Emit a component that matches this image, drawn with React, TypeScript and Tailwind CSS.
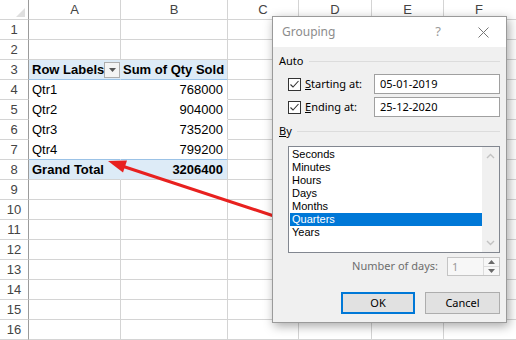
import React from 'react';

const CELL = "font-['Liberation_Sans',Arial,sans-serif] text-[13px] text-black whitespace-nowrap";
const GRID = 'border-[#d4d4d4]';

// row number header cell
function RowHead({ n }: { n: number | string }) {
  return (
    <div className="w-[29px] h-[20px] shrink-0 flex items-center justify-center border-r border-b border-r-[#9b9b9b] border-b-[#d4d4d4] text-[13px] text-[#444] font-['Liberation_Sans',Arial,sans-serif]">
      {n}
    </div>
  );
}

function RestCells() {
  return (
    <>
      <div className={`w-[71px] h-[20px] shrink-0 border-r border-b ${GRID}`} />
      <div className={`w-[73px] h-[20px] shrink-0 border-r border-b ${GRID}`} />
      <div className={`w-[72px] h-[20px] shrink-0 border-r border-b ${GRID}`} />
      <div className={`w-[80px] h-[20px] shrink-0 border-b ${GRID}`} />
    </>
  );
}

function EmptyRow({ n }: { n: number }) {
  return (
    <div className="flex">
      <RowHead n={n} />
      <div className={`w-[92px] h-[20px] shrink-0 border-r border-b ${GRID}`} />
      <div className={`w-[107px] h-[20px] shrink-0 border-r border-b ${GRID}`} />
      <RestCells />
    </div>
  );
}

function DataRow({ n, label, value, last }: { n: number; label: string; value: string; last?: boolean }) {
  return (
    <div className="flex">
      <RowHead n={n} />
      <div className={`w-[92px] h-[20px] shrink-0 flex items-center pl-[3px] border-r border-b border-r-white ${last ? 'border-b-[#9bc2e6]' : 'border-b-white'} ${CELL}`}>
        {label}
      </div>
      <div className={`w-[107px] h-[20px] shrink-0 flex items-center justify-end pr-[4px] border-r border-b border-r-[#d4d4d4] ${last ? 'border-b-[#9bc2e6]' : 'border-b-white'} ${CELL}`}>
        {value}
      </div>
      <RestCells />
    </div>
  );
}

function Checkbox() {
  return (
    <div className="w-[13px] h-[13px] shrink-0 border border-[#333] bg-white flex items-center justify-center">
      <svg width="11" height="11" viewBox="0 0 11 11">
        <path d="M1.5 5.5 L4 8 L9.5 2" fill="none" stroke="#333" strokeWidth="1.1" />
      </svg>
    </div>
  );
}

function Chevron({ up }: { up?: boolean }) {
  return (
    <svg width="9" height="6" viewBox="0 0 9 6">
      <path d={up ? 'M1 5 L4.5 1.5 L8 5' : 'M1 1 L4.5 4.5 L8 1'} fill="none" stroke="#c2c2c2" strokeWidth="1.4" />
    </svg>
  );
}

const UNITS = ['Seconds', 'Minutes', 'Hours', 'Days', 'Months', 'Quarters', 'Years'];

function GroupingDialog() {
  return (
    <div className="absolute left-[272px] top-[16px] w-[235px] h-[307px] border border-[#9a9a9a] bg-[#f0f0f0] shadow-[2px_3px_10px_rgba(0,0,0,0.35)] flex flex-col font-['Noto_Sans',sans-serif] text-[11px] text-black">
      {/* title bar */}
      <div className="h-[30px] bg-white flex items-center shrink-0">
        <span className="flex-1 pl-[9px] text-[12px] text-[#8c8c8c]">Grouping</span>
        <span className="w-[44px] text-center text-[13px] text-[#9a9a9a]">?</span>
        <span className="w-[46px] flex justify-center">
          <svg width="11" height="11" viewBox="0 0 11 11">
            <path d="M0.5 0.5 L10.5 10.5 M10.5 0.5 L0.5 10.5" stroke="#777" strokeWidth="1" />
          </svg>
        </span>
      </div>

      <div className="flex flex-col pl-[6px] pr-[6px] pt-[7px]">
        {/* Auto group */}
        <div className="h-[14px] flex items-center gap-[6px]">
          <span>Auto</span>
          <div className="flex-1 h-px bg-[#dcdcdc]" />
        </div>
        <div className="mt-[6px] flex items-center h-[20px]">
          <div className="ml-[9px]"><Checkbox /></div>
          <span className="ml-[4px] flex-1"><span className="underline">S</span>tarting at:</span>
          <div className="w-[126px] h-[20px] border border-[#a0a0a0] bg-white flex items-center pl-[5px]">05-01-2019</div>
        </div>
        <div className="mt-[3px] flex items-center h-[20px]">
          <div className="ml-[9px]"><Checkbox /></div>
          <span className="ml-[4px] flex-1"><span className="underline">E</span>nding at:</span>
          <div className="w-[126px] h-[20px] border border-[#a0a0a0] bg-white flex items-center pl-[5px]">25-12-2020</div>
        </div>

        {/* By group */}
        <div className="mt-[7px] h-[14px] flex items-center gap-[5px]">
          <span><span className="underline">B</span>y</span>
          <div className="flex-1 h-px bg-[#dcdcdc]" />
        </div>
        <div className="mt-[8px] ml-[9px] h-[107px] border border-[#828790] bg-white flex">
          <div className="flex-1 pl-px pt-px flex flex-col font-['Liberation_Sans',Arial,sans-serif]">
            {UNITS.map(u => (
              <div
                key={u}
                className={`h-[13px] leading-[13px] pl-[2px] ${u === 'Quarters' ? 'bg-[#0078d7] text-white' : ''}`}
              >
                {u}
              </div>
            ))}
          </div>
          <div className="w-[17px] bg-[#f0f0f0] flex flex-col items-center justify-between py-[6px]">
            <Chevron up />
            <Chevron />
          </div>
        </div>

        {/* Number of days */}
        <div className="mt-[4px] flex items-center justify-end h-[19px]">
          <span className="text-[#6d6d6d]">Number of days:</span>
          <div className="ml-[9px] w-[53px] h-[19px] border border-[#c4c4c4] bg-[#f7f7f7] flex">
            <span className="flex-1 pl-[4px] text-[#9a9a9a] leading-[17px]">1</span>
            <div className="w-[16px] border-l border-[#dcdcdc] flex flex-col">
              <div className="flex-1 flex items-center justify-center border-b border-[#dcdcdc]">
                <svg width="7" height="4" viewBox="0 0 7 4"><path d="M0 4 L3.5 0 L7 4 Z" fill="#6a6a6a" /></svg>
              </div>
              <div className="flex-1 flex items-center justify-center">
                <svg width="7" height="4" viewBox="0 0 7 4"><path d="M0 0 L3.5 4 L7 0 Z" fill="#6a6a6a" /></svg>
              </div>
            </div>
          </div>
        </div>

        {/* buttons */}
        <div className="mt-[16px] flex justify-end gap-[10px]">
          <button className="w-[74px] h-[22px] border-2 border-[#0078d7] bg-[#e1e1e1] text-[11px]">OK</button>
          <button className="w-[75px] h-[22px] border border-[#adadad] bg-[#e1e1e1] text-[11px]">Cancel</button>
        </div>
      </div>
    </div>
  );
}

export default function App() {
  return (
    <div className="relative w-[516px] h-[340px] overflow-hidden bg-white">
      {/* column headers */}
      <div className="flex">
        <div className="w-[29px] h-[20px] shrink-0 relative border-r border-b border-r-[#9b9b9b] border-b-[#d4d4d4]">
          <svg className="absolute left-[16px] top-[8px]" width="9" height="9" viewBox="0 0 9 9">
            <path d="M9 0 L9 9 L0 9 Z" fill="#dfdfdf" />
          </svg>
        </div>
        {[
          ['A', 'w-[92px]'],
          ['B', 'w-[107px]'],
          ['C', 'w-[71px]'],
          ['D', 'w-[73px]'],
          ['E', 'w-[72px]'],
        ].map(([c, w]) => (
          <div key={c} className={`${w} h-[20px] shrink-0 flex items-center justify-center border-r border-b border-r-[#d4d4d4] border-b-[#d4d4d4] text-[13px] text-[#444] font-['Liberation_Sans',Arial,sans-serif]`}>
            {c}
          </div>
        ))}
        <div className="w-[80px] h-[20px] shrink-0 flex items-center pl-[31px] border-b border-[#d4d4d4] text-[13px] text-[#444] font-['Liberation_Sans',Arial,sans-serif]">
          F
        </div>
      </div>

      <EmptyRow n={1} />
      <EmptyRow n={2} />

      {/* pivot header row */}
      <div className="flex">
        <RowHead n={3} />
        <div className={`w-[92px] h-[20px] shrink-0 flex items-center pl-[3px] bg-[#ddebf7] border-r border-b border-r-[#ddebf7] border-b-[#9bc2e6] font-bold ${CELL} text-[12.5px]`}>
          <span>Row Labels</span>
          <span className="ml-auto mr-[1px] w-[16px] h-[16px] shrink-0 border border-[#adadad] bg-[#f4f4f4] flex items-center justify-center">
            <svg width="7" height="4" viewBox="0 0 7 4"><path d="M0 0 L3.5 4 L7 0 Z" fill="#555" /></svg>
          </span>
        </div>
        <div className={`w-[107px] h-[20px] shrink-0 flex items-center pl-[2px] bg-[#ddebf7] border-r border-b border-r-[#d4d4d4] border-b-[#9bc2e6] font-bold ${CELL}`}>
          Sum of Qty Sold
        </div>
        <RestCells />
      </div>

      <DataRow n={4} label="Qtr1" value="768000" />
      <DataRow n={5} label="Qtr2" value="904000" />
      <DataRow n={6} label="Qtr3" value="735200" />
      <DataRow n={7} label="Qtr4" value="799200" last />

      {/* grand total */}
      <div className="flex">
        <RowHead n={8} />
        <div className={`w-[92px] h-[20px] shrink-0 flex items-center pl-[3px] bg-[#ddebf7] border-r border-b border-r-[#ddebf7] border-b-[#d4d4d4] font-bold ${CELL}`}>
          Grand Total
        </div>
        <div className={`w-[107px] h-[20px] shrink-0 flex items-center justify-end pr-[4px] bg-[#ddebf7] border-r border-b ${GRID} font-bold ${CELL}`}>
          3206400
        </div>
        <RestCells />
      </div>

      {[9, 10, 11, 12, 13, 14, 15, 16].map(n => (
        <EmptyRow key={n} n={n} />
      ))}

      {/* red annotation arrow */}
      <svg className="absolute left-0 top-0 pointer-events-none" width="516" height="340" viewBox="0 0 516 340">
        <line x1="283" y1="219" x2="122" y2="166" stroke="#e8211f" strokeWidth="3" />
        <path d="M108 161 L127 160.5 L123 172.5 Z" fill="#e8211f" />
      </svg>

      <GroupingDialog />
    </div>
  );
}
